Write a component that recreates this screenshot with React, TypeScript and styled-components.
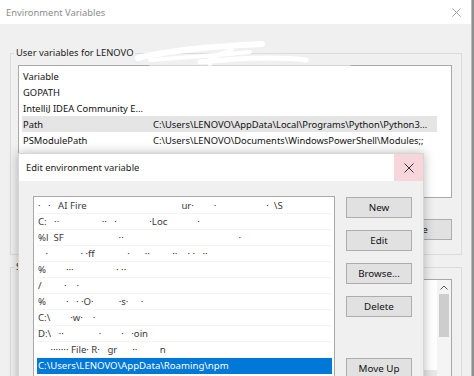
import React from "react";
import styled, { createGlobalStyle } from "styled-components";

const GlobalStyle = createGlobalStyle`
  html, body {
    margin: 0;
    padding: 0;
    background: #8f8f8f;
  }
  body {
    width: 474px;
    height: 376px;
    overflow: hidden;
    font-family: "Noto Sans", "Open Sans", sans-serif;
    font-size: 9.4px;
    color: #000;
  }
`;

const USER_VARS = [
  { name: "Variable", value: "" },
  { name: "GOPATH", value: "" },
  { name: "IntelliJ IDEA Community E...", value: "" },
  { name: "Path", value: "C:\\Users\\LENOVO\\AppData\\Local\\Programs\\Python\\Python3...", active: true },
  { name: "PSModulePath", value: "C:\\Users\\LENOVO\\Documents\\WindowsPowerShell\\Modules;;" },
  { name: "TEMP", value: "%USERPROFILE%\\AppData\\Local\\Temp" },
  { name: "TMP", value: "%USERPROFILE%\\AppData\\Local\\Temp" },
];

// most of the path entries were scrubbed out in the screenshot
const PATH_ROWS = [
  "\u00b7   \u00b7   AI Fire                                      ur\u00b7        \u00b7                    \u00b7  \\S",
  "C:   \u00b7\u00b7                 \u00b7\u00b7   \u00b7             \u00b7Loc            \u00b7",
  "%l  SF                      \u00b7\u00b7                                              \u00b7",
  "   \u00b7             \u00b7 \u00b7ff             \u00b7      \u00b7\u00b7         \u00b7\u00b7    \u00b7 \u00b7   \u00b7\u00b7",
  "%        \u00b7\u00b7\u00b7                 \u00b7 \u00b7\u00b7",
  "/         \u00b7    \u00b7",
  "%        \u00b7   \u00b7 \u00b7O\u00b7          \u00b7s\u00b7     \u00b7",
  "C:\\        \u00b7w\u00b7    \u00b7",
  "D:\\   \u00b7\u00b7              \u00b7        \u00b7   \u00b7oin",
  "     \u00b7\u00b7\u00b7\u00b7\u00b7\u00b7\u00b7 File\u00b7 R\u00b7   gr      \u00b7\u00b7         n",
  "C:\\Users\\LENOVO\\AppData\\Roaming\\npm",
];

const Screen = styled.div`
  position: relative;
  width: 474px;
  height: 376px;
  overflow: hidden;
  display: flex;
`;

const OuterWindow = styled.div`
  width: 471px;
  height: 376px;
  display: flex;
  flex-direction: column;
  background: #f0f0f0;
  border-right: 1px solid #b8b8b8;
`;

const TitleBar = styled.div`
  height: 24px;
  flex: none;
  display: flex;
  align-items: center;
  justify-content: space-between;
  background: #fff;
  padding-left: 6px;
  color: #8c8c8c;
`;

const CloseBox = styled.div<{ $hover?: boolean; $w: number }>`
  width: ${(p) => p.$w}px;
  align-self: stretch;
  display: flex;
  align-items: center;
  justify-content: center;
  background: ${(p) => (p.$hover ? "#f6d6da" : "transparent")};
`;

const OuterBody = styled.div`
  flex: 1;
  padding: 22px 9px 0 10px;
  display: flex;
  flex-direction: column;
  gap: 5px;
`;

const Group = styled.fieldset`
  margin: 0;
  padding: 5px 9px 14px 7px;
  border: 1px solid #dcdcdc;
  min-width: 0;
`;

const GroupLabel = styled.legend`
  padding: 0 2px;
  margin-left: -4px;
  color: #1a1a1a;
  line-height: 14px;
`;

const ListView = styled.div<{ $h: number }>`
  height: ${(p) => p.$h}px;
  background: #fff;
  border: 1px solid #a9a9a9;
  padding: 2px 14px 0 3px;
  overflow: hidden;
  display: flex;
  flex-direction: column;
`;

const VarRow = styled.div<{ $active?: boolean }>`
  height: 16px;
  flex: none;
  display: grid;
  grid-template-columns: 130px 1fr;
  align-items: center;
  background: ${(p) => (p.$active ? "#e5e5e5" : "transparent")};
  white-space: nowrap;
  overflow: hidden;
  color: #111;
`;

const Cell = styled.span`
  padding-left: 1px;
  overflow: hidden;
`;

const ButtonRow = styled.div`
  display: flex;
  justify-content: flex-end;
  gap: 8px;
  margin-top: 21px;
`;

const WinButton = styled.button<{ $w: number }>`
  width: ${(p) => p.$w}px;
  height: 21px;
  padding: 0;
  background: #e1e1e1;
  border: 1px solid #adadad;
  font-family: "Noto Sans", "Open Sans", sans-serif;
  font-size: 9.8px;
  color: #111;
`;

const SysList = styled.div`
  height: 120px;
  background: #fff;
  border: 1px solid #a9a9a9;
  display: flex;
  justify-content: flex-end;
`;

const SysRows = styled.div`
  flex: 1;
  display: flex;
  flex-direction: column;
  justify-content: flex-end;
  padding-bottom: 14px;
`;

const SysSelected = styled.div`
  height: 16px;
  background: #e8e8e8;
`;

const ScrollBar = styled.div`
  width: 14px;
  display: flex;
  flex-direction: column;
  background: #f4f4f4;
`;

const ScrollArrow = styled.div`
  height: 14px;
  display: flex;
  align-items: center;
  justify-content: center;
`;

const ScrollThumb = styled.div`
  height: 43px;
  margin: 0 2px;
  background: #cdcdcd;
`;

const Dialog = styled.div`
  position: absolute;
  left: 18px;
  top: 153px;
  width: 404px;
  height: 240px;
  background: #f0f0f0;
  box-shadow: 0 0 10px rgba(0, 0, 0, 0.28);
  border: 1px solid #d6d6d6;
  display: flex;
  flex-direction: column;
`;

const DialogTitle = styled.div`
  height: 27px;
  flex: none;
  display: flex;
  align-items: center;
  justify-content: space-between;
  background: #fff;
  padding-left: 7px;
  color: #1a1a1a;
`;

const DialogBody = styled.div`
  display: flex;
  gap: 11px;
  padding: 15px 11px 0 14px;
`;

const PathList = styled.div`
  width: 298px;
  height: 200px;
  background: #fff;
  border: 1px solid #a9a9a9;
  padding: 1px 2px 0 3px;
  display: flex;
  flex-direction: column;
`;

const PathRow = styled.div<{ $selected?: boolean }>`
  height: 16px;
  flex: none;
  padding-left: 1px;
  line-height: 16px;
  white-space: pre;
  overflow: hidden;
  box-sizing: border-box;
  border-bottom: ${(p) => (p.$selected ? "none" : "1px solid #f4f4f4")};
  background: ${(p) => (p.$selected ? "#0078d7" : "transparent")};
  color: ${(p) => (p.$selected ? "#fff" : "#3a3a3a")};
  font-size: 9.6px;
`;

const ButtonColumn = styled.div`
  display: flex;
  flex-direction: column;
  gap: 12px;
  padding-top: 1px;
`;

const Spacer = styled.div`
  height: 17px;
`;

const Scribble = styled.svg`
  position: absolute;
  left: 0;
  top: 0;
  pointer-events: none;
`;

function CloseIcon({ color, size }: { color: string; size: number }) {
  return (
    <svg width={size} height={size} viewBox="0 0 10 10">
      <path d="M0.5 0.5 L9.5 9.5 M9.5 0.5 L0.5 9.5" stroke={color} strokeWidth="1" />
    </svg>
  );
}

export default function App() {
  return (
    <>
      <GlobalStyle />
      <Screen>
        <OuterWindow>
          <TitleBar>
            Environment Variables
            <CloseBox $w={30}>
              <CloseIcon color="#9a9a9a" size={9} />
            </CloseBox>
          </TitleBar>
          <OuterBody>
            <Group>
              <GroupLabel>User variables for LENOVO</GroupLabel>
              <ListView $h={129}>
                {USER_VARS.map((v) => (
                  <VarRow key={v.name} $active={v.active}>
                    <Cell>{v.name}</Cell>
                    <Cell>{v.value}</Cell>
                  </VarRow>
                ))}
              </ListView>
              <ButtonRow>
                <WinButton $w={75}>New...</WinButton>
                <WinButton $w={75}>Edit...</WinButton>
                <WinButton $w={78}>Delete</WinButton>
              </ButtonRow>
            </Group>
            <Group>
              <GroupLabel>System variables</GroupLabel>
              <SysList>
                <SysRows>
                  <SysSelected />
                </SysRows>
                <ScrollBar>
                  <ScrollArrow>
                    <svg width="8" height="5" viewBox="0 0 8 5">
                      <path d="M0.5 4.5 L4 1 L7.5 4.5" stroke="#555" strokeWidth="1" fill="none" />
                    </svg>
                  </ScrollArrow>
                  <ScrollThumb />
                </ScrollBar>
              </SysList>
            </Group>
          </OuterBody>
        </OuterWindow>

        <Scribble width="474" height="376" viewBox="0 0 474 376">
          <g stroke="#fff" strokeLinecap="round" fill="none">
            <path d="M138 58 C 170 50, 220 46, 262 44" strokeWidth="6" />
            <path d="M150 60 C 190 57, 220 55, 250 52" strokeWidth="4" />
            <path d="M200 62 C 240 58, 280 57, 306 60" strokeWidth="5" />
            <path d="M232 50 C 214 56, 205 60, 210 64" strokeWidth="4" />
            <path d="M150 67 L 350 67" strokeWidth="3" />
            <path d="M48 186 C 56 180, 70 176, 82 172" strokeWidth="5" />
            <path d="M46 196 C 52 190, 62 184, 74 178" strokeWidth="4" />
            <path d="M24 258 C 30 250, 34 246, 40 244" strokeWidth="6" />
          </g>
        </Scribble>

        <Dialog>
          <DialogTitle>
            Edit environment variable
            <CloseBox $w={29} $hover>
              <CloseIcon color="#333" size={10} />
            </CloseBox>
          </DialogTitle>
          <DialogBody>
            <PathList>
              {PATH_ROWS.map((r, i) => (
                <PathRow key={i} $selected={i === PATH_ROWS.length - 1}>
                  {r}
                </PathRow>
              ))}
            </PathList>
            <ButtonColumn>
              <WinButton $w={66}>New</WinButton>
              <WinButton $w={66}>Edit</WinButton>
              <WinButton $w={66}>Browse...</WinButton>
              <WinButton $w={66}>Delete</WinButton>
              <Spacer />
              <WinButton $w={66}>Move Up</WinButton>
            </ButtonColumn>
          </DialogBody>
        </Dialog>
      </Screen>
    </>
  );
}
